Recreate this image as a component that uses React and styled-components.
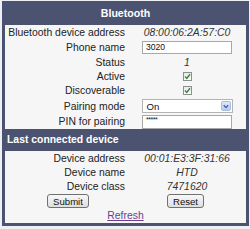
import React from "react";
import styled, { createGlobalStyle } from "styled-components";

const GlobalStyle = createGlobalStyle`
  html, body {
    margin: 0;
    padding: 0;
    background: #eef0f3;
  }
  body {
    font-family: "Liberation Sans", Arial, sans-serif;
    font-size: 10.4px;
    color: #222;
  }
`;

const Panel = styled.div`
  margin: 1px 2px 0 2px;
  width: 241px;
  border: 3px solid #4b5371;
  background: #f6f6f6;
`;

const Title = styled.div`
  background: #4b5371;
  color: #fff;
  font-weight: bold;
  text-align: center;
  height: 21px;
  line-height: 19px;
  font-size: 10.6px;
`;

const Band = styled.div`
  background: #4b5371;
  color: #fff;
  font-weight: bold;
  height: 22px;
  line-height: 22px;
  padding-left: 2px;
  font-size: 10.4px;
`;

const Row = styled.div`
  display: grid;
  grid-template-columns: 126px 1fr;
  align-items: center;
  height: ${(p) => p.$h || 14}px;
`;

const Label = styled.div`
  text-align: right;
  padding-right: 6px;
  white-space: nowrap;
`;

const Value = styled.div`
  display: flex;
  justify-content: center;
  align-items: center;
  padding-right: 3px;
  font-style: ${(p) => (p.$plain ? "normal" : "italic")};
  color: #333;
  white-space: nowrap;
`;

const TextBox = styled.div`
  box-sizing: border-box;
  width: 90px;
  height: ${(p) => p.$h || 13}px;
  border: 1px solid #a8a8a8;
  background: #fff;
  font-size: 8.6px;
  font-style: normal;
  color: #111;
  padding: 1px 3px;
  line-height: 9px;
`;

const Stars = styled.span`
  font-size: 7px;
  letter-spacing: -0.5px;
  position: relative;
  top: -2px;
`;

const SelectBox = styled.div`
  box-sizing: border-box;
  width: 91px;
  height: 14px;
  border: 1px solid #b4b4b4;
  background: #fff;
  display: flex;
  align-items: center;
  justify-content: space-between;
  font-style: normal;
  color: #111;
  font-size: 9.6px;
  padding-left: 4px;
`;

const DropButton = styled.span`
  width: 10px;
  height: 10px;
  margin-right: 1px;
  border-radius: 2px;
  background: linear-gradient(#dfe8fa, #bccbec);
  border: 1px solid #a9bbe0;
  box-sizing: border-box;
  display: flex;
  align-items: center;
  justify-content: center;
`;

const Check = styled.span`
  box-sizing: border-box;
  width: 9px;
  height: 9px;
  border: 1px solid #8e8f8f;
  background: linear-gradient(#e9e9e9, #fdfdfd);
  display: flex;
  align-items: center;
  justify-content: center;
`;

const Button = styled.button`
  font-family: "Liberation Sans", Arial, sans-serif;
  font-size: 9.6px;
  color: #111;
  height: 14px;
  padding: 0 5px;
  border: 1px solid #707070;
  border-radius: 3px;
  background: linear-gradient(#f8f8f8, #dedede);
  line-height: 11px;
`;

const Buttons = styled.div`
  display: grid;
  grid-template-columns: 126px 1fr;
  height: 16px;
  align-items: center;
  justify-items: center;
  & > :last-child {
    margin-right: 6px;
  }
`;

const LinkRow = styled.div`
  height: 13px;
  line-height: 13px;
  text-align: center;
  padding-bottom: 1px;
`;

const Link = styled.a`
  color: #6a3d8f;
  text-decoration: underline;
  cursor: pointer;
`;

function CheckMark() {
  return (
    <Check>
      <svg width="7" height="7" viewBox="0 0 7 7">
        <path d="M1 3.6 L2.8 5.4 L6 1.3" fill="none" stroke="#2f8a2f" strokeWidth="1.4" />
      </svg>
    </Check>
  );
}

export default function App() {
  return (
    <>
      <GlobalStyle />
      <Panel>
        <Title>Bluetooth</Title>
        <Row $h={15}>
          <Label>Bluetooth device address</Label>
          <Value>08:00:06:2A:57:C0</Value>
        </Row>
        <Row $h={15}>
          <Label>Phone name</Label>
          <Value>
            <TextBox>3020</TextBox>
          </Value>
        </Row>
        <Row>
          <Label>Status</Label>
          <Value>1</Value>
        </Row>
        <Row>
          <Label>Active</Label>
          <Value>
            <CheckMark />
          </Value>
        </Row>
        <Row $h={15}>
          <Label>Discoverable</Label>
          <Value>
            <CheckMark />
          </Value>
        </Row>
        <Row $h={16}>
          <Label>Pairing mode</Label>
          <Value>
            <SelectBox>
              On
              <DropButton>
                <svg width="6" height="5" viewBox="0 0 6 5">
                  <path d="M0.8 1.2 L3 3.6 L5.2 1.2" fill="none" stroke="#3b5fb0" strokeWidth="1.3" />
                </svg>
              </DropButton>
            </SelectBox>
          </Value>
        </Row>
        <Row $h={15}>
          <Label>PIN for pairing</Label>
          <Value>
            <TextBox $h={14}>
              <Stars>*****</Stars>
            </TextBox>
          </Value>
        </Row>
        <Band>Last connected device</Band>
        <Row>
          <Label>Device address</Label>
          <Value>00:01:E3:3F:31:66</Value>
        </Row>
        <Row>
          <Label>Device name</Label>
          <Value>HTD</Value>
        </Row>
        <Row>
          <Label>Device class</Label>
          <Value>7471620</Value>
        </Row>
        <Buttons>
          <Button>Submit</Button>
          <Button>Reset</Button>
        </Buttons>
        <LinkRow>
          <Link>Refresh</Link>
        </LinkRow>
      </Panel>
    </>
  );
}
